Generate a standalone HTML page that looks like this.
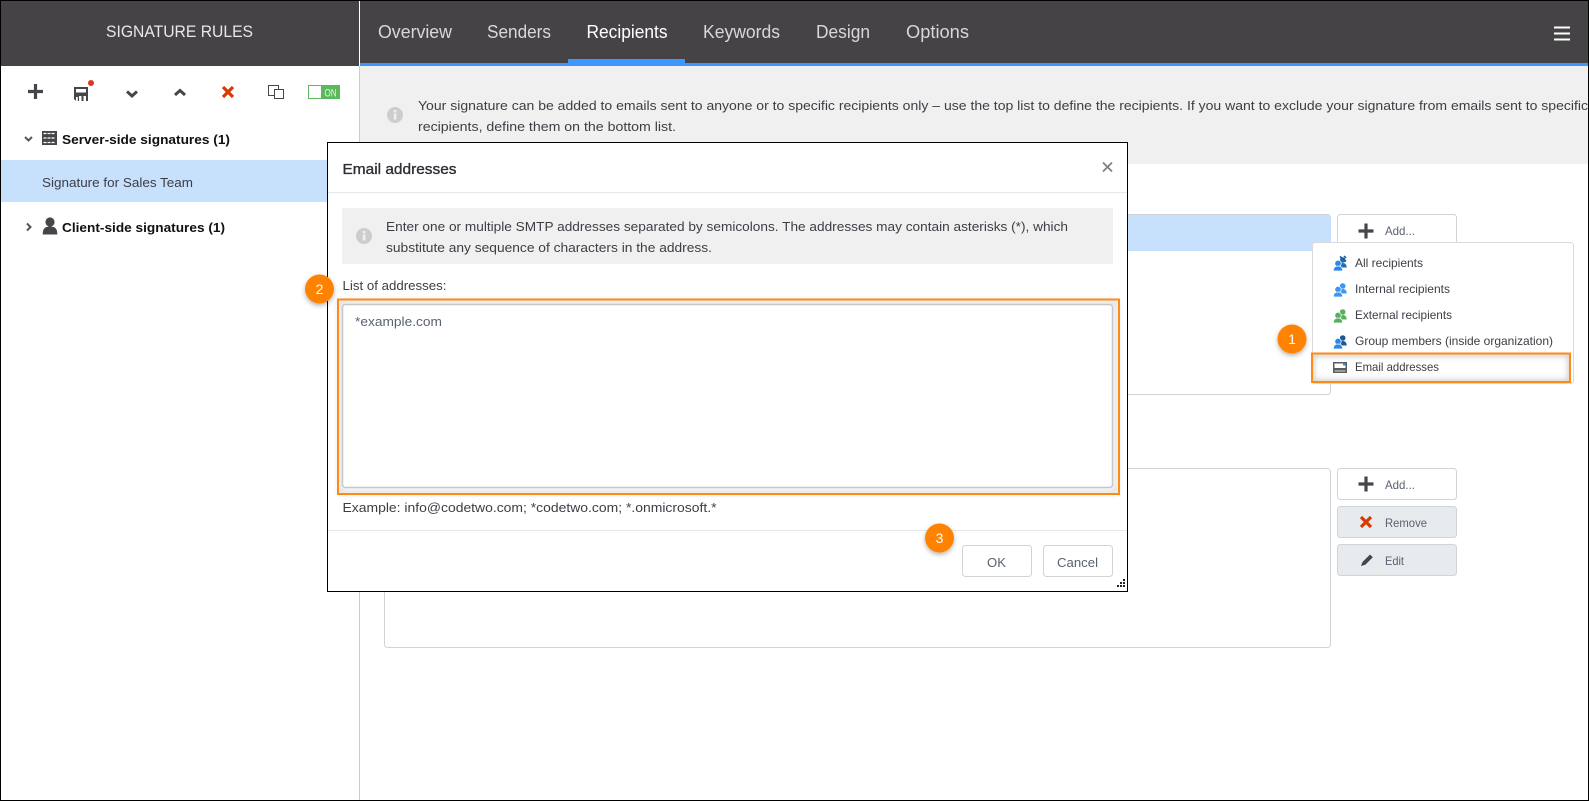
<!DOCTYPE html>
<html><head><meta charset="utf-8"><title>Signature Rules</title>
<style>
html,body{margin:0;padding:0;background:#fff;width:1589px;height:801px;overflow:hidden}
svg{display:block;position:absolute;left:0;top:0}
text{font-family:"Liberation Sans",sans-serif;font-size:13px;fill:#3d3d45;white-space:pre}
.b{font-weight:bold;fill:#111}
.t{font-size:18px;fill:#d8d8d8}
.s{font-size:12px}
.g{fill:#5a6270}
</style></head><body>
<svg width="1589" height="801" viewBox="0 0 1589 801" xmlns="http://www.w3.org/2000/svg">
<defs>
<filter id="sh" x="-40%" y="-40%" width="180%" height="180%"><feDropShadow dx="0" dy="2" stdDeviation="2.500" flood-color="#000" flood-opacity=".3"/></filter>
<filter id="gl" x="-5%" y="-30%" width="110%" height="160%"><feGaussianBlur stdDeviation="3"/></filter>
<g id="info"><circle r="8" fill="#cdcdcd"/><rect x="-1.200" y="-1.500" width="2.600" height="6" fill="#f0f0f0"/><rect x="-1.200" y="-5" width="2.600" height="2.400" fill="#f0f0f0"/></g>
<path id="plus" d="M-7.500 0H7.500M0 -7.500V7.500" stroke="#44464a" stroke-width="3.200" fill="none"/>
<path id="x" d="M-5 -5L5 5M5 -5L-5 5" stroke="#d83b01" stroke-width="3.200" fill="none"/>
<g id="pf"><circle cx="5" cy="6.500" r="3.200" stroke="#fff" stroke-width=".7"/><path d="M0.300 14c0-3.700 1.800-5 4.700-5s4.700 1.300 4.700 5z" stroke="#fff" stroke-width=".7"/></g>
<g id="pb"><circle cx="9.700" cy="3" r="2.800"/><path d="M6 10.500c0-3 1.300-4.500 3.700-4.500s4 1.500 4 4.500z"/></g>
</defs>

<!-- sidebar header -->
<rect x="0" y="0" width="1589" height="801" fill="#fff"/>
<rect x="1" y="1" width="358" height="65" fill="#464346"/>
<text x="106" y="37" textLength="147" lengthAdjust="spacingAndGlyphs" style="font-size:17px;fill:#e8e8e8">SIGNATURE RULES</text>

<!-- top nav -->
<rect x="360" y="1" width="1228" height="62" fill="#464346"/>
<rect x="360" y="63" width="1228" height="3" fill="#3c97ff"/>
<rect x="568" y="59" width="117" height="5" fill="#3c97ff"/>
<text class="t" x="378" y="38" textLength="74" lengthAdjust="spacingAndGlyphs">Overview</text>
<text class="t" x="487" y="38" textLength="64" lengthAdjust="spacingAndGlyphs">Senders</text>
<text class="t" x="586.500" y="38" textLength="81" lengthAdjust="spacingAndGlyphs" style="fill:#fff">Recipients</text>
<text class="t" x="703" y="38" textLength="77" lengthAdjust="spacingAndGlyphs">Keywords</text>
<text class="t" x="816" y="38" textLength="54" lengthAdjust="spacingAndGlyphs">Design</text>
<text class="t" x="906" y="38" textLength="63" lengthAdjust="spacingAndGlyphs">Options</text>
<path d="M1554 27.500H1570M1554 33.500H1570M1554 39.500H1570" stroke="#fff" stroke-width="2"/>

<!-- info band -->
<rect x="360" y="66" width="1228" height="98" fill="#f0f0f0"/>
<use href="#info" x="395" y="115"/>
<text x="418" y="110" textLength="1170" lengthAdjust="spacingAndGlyphs">Your signature can be added to emails sent to anyone or to specific recipients only – use the top list to define the recipients. If you want to exclude your signature from emails sent to specific</text>
<text x="418" y="131" textLength="258" lengthAdjust="spacingAndGlyphs">recipients, define them on the bottom list.</text>

<!-- borders -->
<rect x="359" y="1" width="1" height="800" fill="#c9ccd0"/>
<rect x="359" y="1" width="1" height="65" fill="#fff"/>
<rect x="0" y="0" width="1589" height="1" fill="#000"/>
<rect x="0" y="0" width="1" height="801" fill="#000"/>
<rect x="1588" y="0" width="1" height="801" fill="#000"/>
<rect x="0" y="800" width="1589" height="1" fill="#000"/>

<!-- toolbar -->
<use href="#plus" x="35.500" y="91.500"/>
<path d="M74 87H88V101H74Z" fill="#44464a"/>
<rect x="76" y="89" width="10" height="3.500" fill="#fff"/>
<rect x="76" y="97" width="1.800" height="4" fill="#fff"/>
<rect x="79" y="96" width="7" height="5" fill="#fff"/>
<rect x="81.500" y="96" width="2" height="5" fill="#44464a"/>
<path d="M74 99L76 101H74Z" fill="#fff"/>
<circle cx="91" cy="83" r="3" fill="#d83b1c"/>
<path d="M127 91.500L132 96L137 91.500" stroke="#44464a" stroke-width="3" fill="none"/>
<path d="M175 95L180 90.500L185 95" stroke="#44464a" stroke-width="3" fill="none"/>
<use href="#x" x="228" y="92"/>
<rect x="268.500" y="85.500" width="10" height="10" fill="#fff" stroke="#44464a"/>
<rect x="274.500" y="89.500" width="9" height="9" fill="#fff" stroke="#44464a"/>
<rect x="308" y="85" width="32" height="14" fill="#5cb85c"/><rect x="309" y="86" width="12" height="12" fill="#fff"/>
<text x="324.500" y="96.500" textLength="12" lengthAdjust="spacingAndGlyphs" style="font-size:11px;fill:#e8f5e8">ON</text>

<!-- tree -->
<path d="M25 137L28.500 140.500L32 137" stroke="#555" stroke-width="2" fill="none"/>
<rect x="42" y="131" width="15" height="14" fill="#44464a"/>
<path d="M43.500 133.500h3m1 0h3m1 0h3M43.500 138h3m1 0h3m1 0h3M43.500 142.500h3m1 0h3m1 0h3" stroke="#fff" stroke-width="1.200"/>
<text class="b" x="62" y="144" textLength="168" lengthAdjust="spacingAndGlyphs">Server-side signatures (1)</text>
<rect x="1" y="160" width="358" height="42" fill="#c7e0fc"/>
<text x="42" y="187" textLength="151" lengthAdjust="spacingAndGlyphs">Signature for Sales Team</text>
<path d="M27 223.500L30.500 227L27 230.500" stroke="#555" stroke-width="2" fill="none"/>
<circle cx="50" cy="222" r="4.600" fill="#44464a"/><path d="M42.700 234.500c0-6.500 2.500-8 7.300-8s7.300 1.500 7.300 8z" fill="#44464a"/>
<text class="b" x="62" y="232" textLength="163" lengthAdjust="spacingAndGlyphs">Client-side signatures (1)</text>

<!-- lists behind -->
<rect x="384.500" y="214.500" width="946" height="180" rx="3" fill="#fff" stroke="#d0d3d8"/>
<path d="M385 215H1328a3 3 0 0 1 3 3V251H385Z" fill="#c7e0fc"/>
<rect x="384.500" y="468.500" width="946" height="179" rx="3" fill="#fff" stroke="#d0d3d8"/>
<rect x="1337.500" y="214.500" width="119" height="32" rx="3" fill="#fff" stroke="#d0d3d8"/>
<use href="#plus" x="1366" y="231"/>
<text class="s g" x="1385" y="235" textLength="30" lengthAdjust="spacingAndGlyphs">Add...</text>
<rect x="1337.500" y="468.500" width="119" height="31" rx="3" fill="#fff" stroke="#d0d3d8"/>
<use href="#plus" x="1366" y="484"/>
<text class="s g" x="1385" y="489" textLength="30" lengthAdjust="spacingAndGlyphs">Add...</text>
<rect x="1337.500" y="506.500" width="119" height="31" rx="3" fill="#e8ebee" stroke="#d0d3d8"/>
<use href="#x" x="1366" y="522"/>
<text class="s g" x="1385" y="527" textLength="42" lengthAdjust="spacingAndGlyphs">Remove</text>
<rect x="1337.500" y="544.500" width="119" height="31" rx="3" fill="#e8ebee" stroke="#d0d3d8"/>
<path d="M1361 566L1362.500 562L1370 554.500L1372.800 557.300L1365.300 564.800Z" fill="#44464a"/>
<text class="s g" x="1385" y="565" textLength="19" lengthAdjust="spacingAndGlyphs">Edit</text>

<!-- dropdown -->
<rect x="1312.500" y="242.500" width="261" height="141" rx="3" fill="#fff" stroke="#d8dade"/>
<use href="#pb" x="1333" y="257" fill="#1f6fb5"/><path d="M1340 256.500l6 5M1344 256l2 2" stroke="#0f5a96" stroke-width="1.500"/><use href="#pf" x="1333" y="257" fill="#2b88e8"/>
<use href="#pb" x="1333" y="283" fill="#3c97f0"/><use href="#pf" x="1333" y="283" fill="#3c97f0"/>
<use href="#pb" x="1333" y="309" fill="#58b05c"/><use href="#pf" x="1333" y="309" fill="#58b05c"/>
<use href="#pb" x="1333" y="335" fill="#1a5a96"/><use href="#pf" x="1333" y="335" fill="#2b88e8"/>
<text x="1355" y="267" textLength="68" lengthAdjust="spacingAndGlyphs" style="font-size:12px">All recipients</text>
<text x="1355" y="293" textLength="95" lengthAdjust="spacingAndGlyphs" style="font-size:12px">Internal recipients</text>
<text x="1355" y="319" textLength="97" lengthAdjust="spacingAndGlyphs" style="font-size:12px">External recipients</text>
<text x="1355" y="345" textLength="198" lengthAdjust="spacingAndGlyphs" style="font-size:12px">Group members (inside organization)</text>
<rect x="1312" y="354" width="258" height="28" fill="#fff"/>
<clipPath id="c1"><rect x="1312" y="354" width="258" height="28"/></clipPath>
<g clip-path="url(#c1)"><rect x="1312" y="354" width="258" height="28" fill="none" stroke="#777" stroke-width="4" filter="url(#gl)" opacity=".45"/></g>
<rect x="1333" y="362" width="14" height="11" fill="#5a5d60"/><rect x="1334.500" y="363.500" width="11" height="4.500" fill="#fff"/><rect x="1343" y="363" width="2.500" height="2.500" fill="#2b88e8"/><rect x="1334.500" y="370.500" width="11" height="1" fill="#ddd"/>
<text x="1355" y="371" textLength="84" lengthAdjust="spacingAndGlyphs" style="font-size:12px">Email addresses</text>
<rect x="1312" y="353.500" width="258" height="28.500" fill="none" stroke="#ff8a14" stroke-width="2"/>

<!-- dialog -->
<rect x="327.500" y="142.500" width="800" height="449" fill="#fff" stroke="#000"/>
<text x="342.500" y="174" textLength="114" lengthAdjust="spacingAndGlyphs" style="font-size:15px;fill:#2e2e36;stroke:#2e2e36;stroke-width:.35">Email addresses</text>
<path d="M1103 162.500L1112 171.500M1112 162.500L1103 171.500" stroke="#808080" stroke-width="1.800"/>
<rect x="328" y="192" width="799" height="1" fill="#e6e8ea"/>
<rect x="342" y="208" width="771" height="56" fill="#f0f0f0"/>
<use href="#info" x="364" y="236"/>
<text x="386" y="231" textLength="682" lengthAdjust="spacingAndGlyphs">Enter one or multiple SMTP addresses separated by semicolons. The addresses may contain asterisks (*), which</text>
<text x="386" y="252" textLength="326" lengthAdjust="spacingAndGlyphs">substitute any sequence of characters in the address.</text>
<text x="342.500" y="290" textLength="104" lengthAdjust="spacingAndGlyphs">List of addresses:</text>
<rect x="340" y="302" width="776" height="190" fill="none" stroke="#777" stroke-width="3" filter="url(#gl)" opacity=".35"/>
<rect x="342.500" y="304.500" width="770" height="183" rx="3" fill="#fff" stroke="#c4c7cc" stroke-width="1.500"/>
<rect x="338" y="299.500" width="781" height="194.500" fill="none" stroke="#ff8a14" stroke-width="2"/>
<text x="355" y="326" textLength="87" lengthAdjust="spacingAndGlyphs" class="g">*example.com</text>
<text x="342.500" y="512" textLength="374" lengthAdjust="spacingAndGlyphs">Example: info@codetwo.com; *codetwo.com; *.onmicrosoft.*</text>
<rect x="328" y="530" width="799" height="1" fill="#e6e8ea"/>
<rect x="962.500" y="545.500" width="69" height="31" rx="3" fill="#fff" stroke="#d0d3d8"/>
<text x="987" y="567" textLength="19" lengthAdjust="spacingAndGlyphs" class="g">OK</text>
<rect x="1043.500" y="545.500" width="69" height="31" rx="3" fill="#fff" stroke="#d0d3d8"/>
<text x="1057" y="567" textLength="41" lengthAdjust="spacingAndGlyphs" class="g">Cancel</text>
<path d="M1123 579h2v2h-2zM1120 582h2v2h-2zM1123 582h2v2h-2zM1117 585h2v2h-2zM1120 585h2v2h-2zM1123 585h2v2h-2z" fill="#222"/>

<!-- badges -->
<g filter="url(#sh)"><circle cx="1292" cy="339" r="14.500" fill="#ff8300"/></g>
<text x="1292" y="344" text-anchor="middle" style="fill:#fff;font-size:14px">1</text>
<g filter="url(#sh)"><circle cx="319.500" cy="289" r="14.500" fill="#ff8300"/></g>
<text x="319.500" y="294" text-anchor="middle" style="fill:#fff;font-size:14px">2</text>
<g filter="url(#sh)"><circle cx="939.500" cy="538" r="14.500" fill="#ff8300"/></g>
<text x="939.500" y="543" text-anchor="middle" style="fill:#fff;font-size:14px">3</text>
</svg>
</body></html>
